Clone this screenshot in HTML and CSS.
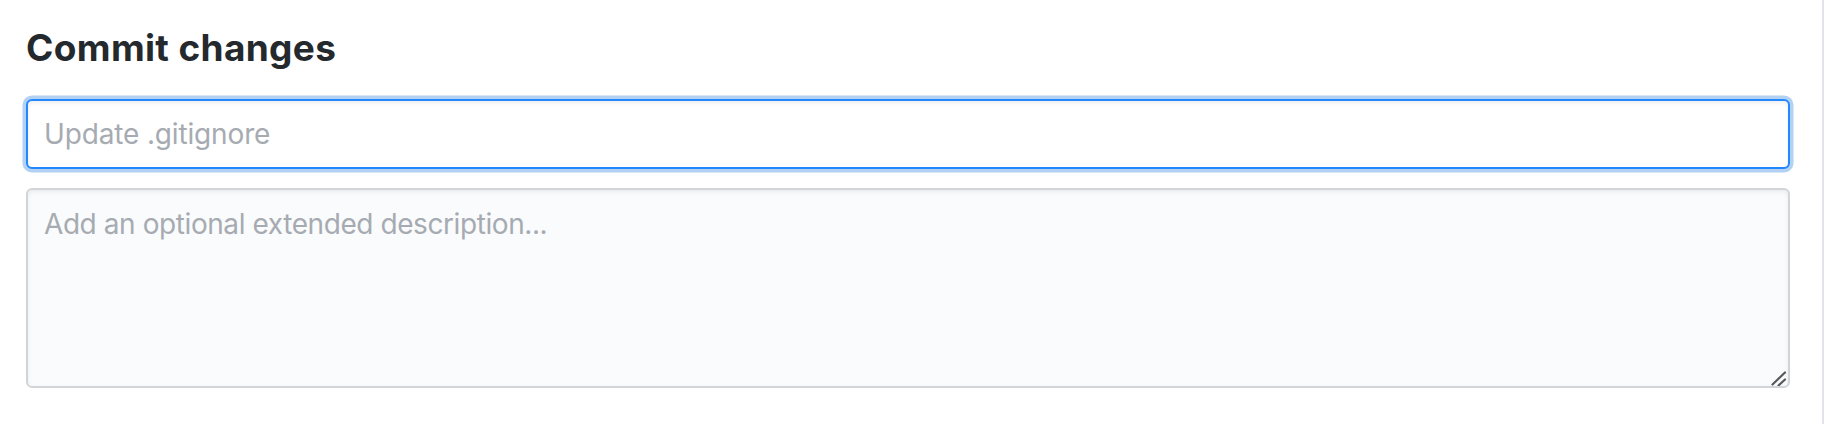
FILE: index.html
```html
<!DOCTYPE html>
<html lang="en">
<head>
<meta charset="utf-8">
<title>Commit changes</title>
<link rel="stylesheet" href="styles.css">
</head>
<body>
<div class="layout">
  <main class="main">
    <h2 class="title">Commit changes</h2>
    <input class="field field-summary is-focused" type="text" placeholder="Update .gitignore">
    <div class="desc-wrap">
      <textarea class="field field-desc" placeholder="Add an optional extended description..."></textarea>
      <svg class="grip" width="16" height="16" viewBox="0 0 16 16" aria-hidden="true">
        <path d="M1.5 14.5 L14 2.5" stroke="#58595b" stroke-width="2.2" stroke-linecap="round" fill="none"/>
        <path d="M7.5 15.5 L14 9.5" stroke="#58595b" stroke-width="2.2" stroke-linecap="round" fill="none"/>
      </svg>
    </div>
  </main>
</div>
</body>
</html>
```
FILE: styles.css
```css
* { box-sizing: border-box; }
html, body { margin: 0; padding: 0; background: #ffffff; }
body {
  font-family: Inter, "Liberation Sans", Arial, sans-serif;
  color: #24292e;
}
.layout {
  display: flex;
  height: 424px;
}
.main {
  width: 1824px;
  border-right: 2px solid #e1e4e8;
  padding: 25px 32px 0 26px;
  display: flex;
  flex-direction: column;
}
.title {
  margin: 0;
  font-size: 37px;
  line-height: 46px;
  font-weight: 700;
  letter-spacing: 0.35px;
  color: #24292e;
}
.field {
  display: block;
  width: 100%;
  font-family: inherit;
  font-size: 28px;
  letter-spacing: -0.15px;
  color: #24292e;
  border: 2px solid #d1d5da;
  border-radius: 6px;
  padding: 0 16px;
  outline: none;
  box-shadow: inset 0 2px 4px rgba(27, 31, 35, 0.075);
}
.field::placeholder { color: #a6abb2; opacity: 1; }
.field-summary {
  margin-top: 28px;
  height: 70px;
  background: #ffffff;
}
.field-summary.is-focused {
  border-color: #2188ff;
  box-shadow: inset 0 2px 4px rgba(27, 31, 35, 0.075), 0 0 0 3.5px rgba(3, 102, 214, 0.3);
}
.desc-wrap {
  position: relative;
  margin-top: 19px;
}
.field-desc {
  height: 200px;
  padding: 14px 16px;
  line-height: 40px;
  letter-spacing: -0.42px;
  background: #fafbfc;
  resize: none;
}
.grip {
  position: absolute;
  right: 3px;
  bottom: 2px;
}
```
